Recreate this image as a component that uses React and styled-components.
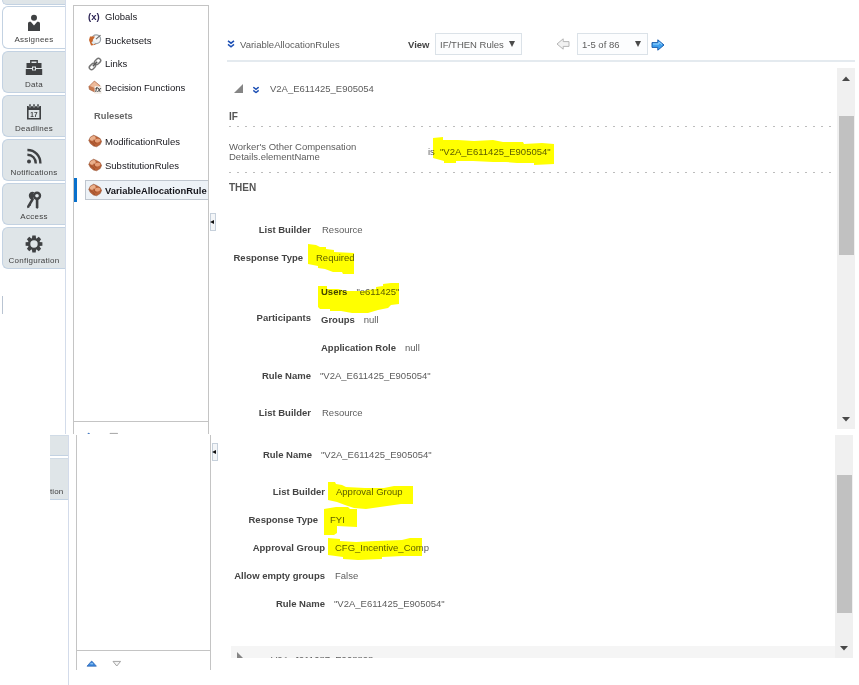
import React from 'react';
import styled, { createGlobalStyle } from 'styled-components';

const tabs = [
  { name: 'Assignees', icon: 'person', active: true },
  { name: 'Data', icon: 'case' },
  { name: 'Deadlines', icon: 'calendar' },
  { name: 'Notifications', icon: 'feed' },
  { name: 'Access', icon: 'keys' },
  { name: 'Configuration', icon: 'gear' },
];

const TabIcon = ({ name }) => (
  <svg width="20" height="18" viewBox="0 0 20 18" fill="#3f4143">
    {name === 'person' && (
      <>
        <circle cx="10" cy="3.8" r="3" />
        <path d="M4 9.4q0-1.6 1.6-1.6h1.2L10 11.4l3.2-3.6h1.2q1.6 0 1.6 1.6V17H4z" />
      </>
    )}
    {name === 'case' && (
      <>
        <path d="M6.8 4.2V1.8h6.4v2.4" fill="none" stroke="#3f4143" strokeWidth="1.4" />
        <path d="M2.5 4h15v5H12V7.6H8V9H2.5zM1.8 10h6.2v1.6h4V10h6.2v6H1.8z" />
        <rect x="9" y="8.6" width="2" height="2" />
      </>
    )}
    {name === 'calendar' && (
      <>
        <path d="M3 3h14v13.5H3z M4.6 7v8h10.8V7z" fillRule="evenodd" />
        <path d="M5 1h2v3H5zM9 1h2v3H9zM13 1h2v3h-2z" stroke="#dfe5e8" strokeWidth=".5" />
        <text x="10" y="13.7" textAnchor="middle" fontSize="6.4" fontWeight="bold">17</text>
      </>
    )}
    {name === 'feed' && (
      <>
        <circle cx="5" cy="14.6" r="2" />
        <path d="M3.4 7.8c5 0 8.4 3.6 8.4 8.6M3.4 3c7.6 0 13 5.8 13 13.4" fill="none" stroke="#3f4143" strokeWidth="2.4" />
      </>
    )}
    {name === 'keys' && (
      <>
        <circle cx="13" cy="4.8" r="3" fill="none" stroke="#3f4143" strokeWidth="2.4" />
        <path d="M11.8 8h2.6v8.4L13.2 18l-1.4-1.4z" />
        <path d="M8 .8a4 4 0 0 0-2.4 6.4L7 8.4 3 15.2l.4 2 2-.6.5-1.5 1-.3.2-1.5 2-3.4.9-1.6C8.6 6 8.6 3 10.4 1.2A5 5 0 0 0 8 .8z" />
      </>
    )}
    {name === 'gear' && (
      <>
        <circle cx="10" cy="9" r="4.9" fill="none" stroke="#3f4143" strokeWidth="2.4" />
        {[0, 45, 90, 135, 180, 225, 270, 315].map((a) => (
          <path key={a} d="M8.3 0.6h3.4l.4 3.3H7.9z" transform={`rotate(${a} 10 9)`} />
        ))}
      </>
    )}
  </svg>
);

const RuleIcon = ({ name }) => (
  <svg width="14" height="14" viewBox="0 0 14 14">
    {name === 'bucket' && (
      <>
        <circle cx="8.2" cy="6.2" r="4.4" fill="#f3f5f6" stroke="#9aa0a5" strokeWidth="1.2" />
        <path d="M2 3.4h5L4.6 7.2l3.2 4.6L3 12.4 1 7z" fill="#c9682e" />
        <path d="M5.6 7.2l2 2.6-2 2-2.2-2z" fill="#dceaf2" />
        <path d="M8 6.2l4.5-4" stroke="#666" strokeWidth="1.1" />
      </>
    )}
    {name === 'link' && (
      <g fill="none" stroke="#757575" strokeWidth="1.5">
        <rect x="6.2" y="2.2" width="6.8" height="4.4" rx="2.2" transform="rotate(-45 9.6 4.4)" />
        <rect x="1" y="7.4" width="6.8" height="4.4" rx="2.2" transform="rotate(-45 4.4 9.6)" />
        <path d="M4.8 9.2l4.4-4.4" stroke="#555" />
      </g>
    )}
    {name === 'rule' && (
      <>
        <path d="M.8 6.4L2.4 3l3.2-1.8 3 1.2 3.6 2.2 1.4 2.8-1.4 3.2-3.6 2.2-3.2-.8-3-2.4z" fill="#bb6237" stroke="#8c4d2e" strokeWidth=".5" />
        <ellipse cx="4.8" cy="4.4" rx="3" ry="2" fill="#eab08c" transform="rotate(-25 4.8 4.4)" />
        <ellipse cx="9.6" cy="6.6" rx="2.8" ry="1.9" fill="#e6a079" transform="rotate(-10 9.6 6.6)" />
        <path d="M2.2 7.4l3.6 2.4.8 2.2M6 5.4L6.4 8l2 2" fill="none" stroke="#8c4526" strokeWidth=".6" />
      </>
    )}
    {name === 'func' && (
      <>
        <path d="M.8 6.6L6.4 1l6 5-1.4 5-3.4 1.6L1.4 9.4z" fill="#c97a50" stroke="#99583a" strokeWidth=".5" />
        <path d="M1.8 6L6.4 1.6l4.8 4L6.8 8z" fill="#edbb9c" />
        <rect x="6.6" y="6.2" width="7" height="7.6" fill="#f4efe9" />
        <text x="7" y="12.3" fontSize="7" fontStyle="italic" fontWeight="bold" fill="#444">fx</text>
      </>
    )}
  </svg>
);

const Chevrons = () => (
  <svg width="8" height="8" viewBox="0 0 8 8" fill="none" stroke="#1c4fb4" strokeWidth="1.5">
    <path d="M1 .8l3 2.4L7 .8M1 4.4l3 2.4 3-2.4" />
  </svg>
);

const PageArrow = ({ dim, back }) => (
  <svg width="14" height="12" viewBox="0 0 14 12">
    <path
      d="M1 3.6h5.8V.8L13 6l-6.2 5.2V8.4H1z"
      fill={dim ? '#f2f2f2' : '#3fa0ee'}
      stroke={dim ? '#b5b5b5' : '#1d5fae'}
      transform={back ? 'translate(14 0) scale(-1 1)' : undefined}
    />
    {!dim && <path d="M2 5h6V3l3 2.6" fill="none" stroke="#9cd6ff" />}
  </svg>
);

const MoveArrows = () => (
  <svg width="38" height="8" viewBox="0 0 38 8">
    <path d="M1 6.2L5.4 1.2h.6l4.4 5z" fill="#3a86dc" stroke="#2a62b0" strokeWidth=".7" />
    <path d="M4.4 3.8h2.6" stroke="#a8d6f8" />
    <path d="M27 1.4h7.6l-3.8 4.6z" fill="#f5f5f5" stroke="#a5a5a5" />
  </svg>
);

const Marker = ({ x, y, w, h, points }) => (
  <MarkerSvg $x={x} $y={y} width={w} height={h} viewBox={`0 0 ${w} ${h}`}>
    <polygon points={points} fill="#ff0" />
  </MarkerSvg>
);

const ScrollBar = ({ thumb, up }) => (
  <Track>
    <Cap $height={up ? 20 : 12}>
      {up && <svg width="8" height="5"><path d="M0 5l4-4.5L8 5z" fill="#484848" /></svg>}
    </Cap>
    <Thumb $height={thumb} />
    <Spacer />
    <Cap $low $height={12}><svg width="8" height="5"><path d="M0 0h8L4 4.5z" fill="#484848" /></svg></Cap>
  </Track>
);

const Field = ({ label, value, end = 85, gap = 11, mark }) => (
  <FieldRow>
    <Label $width={end}>{label}</Label>
    <Value $gap={gap}>{value}{mark && <Marker {...mark} />}</Value>
  </FieldRow>
);

const App = () => (
  <>
    <GlobalStyle />
    <Page>
      <UpperPane>
        <Rail>
          <TabStub />
          {tabs.map((tab) => (
            <Tab key={tab.name} $active={tab.active}>
              <TabIcon name={tab.icon} />
              <span>{tab.name}</span>
            </Tab>
          ))}
          <Tick />
        </Rail>
        <SidePanel>
          <SideList>
            <Item $h={20}><Var>(x)</Var>Globals</Item>
            <Item $h={28}><RuleIcon name="bucket" />Bucketsets</Item>
            <Item $h={19}><RuleIcon name="link" />Links</Item>
            <Item $h={28}><RuleIcon name="func" />Decision Functions</Item>
            <SideTitle>Rulesets</SideTitle>
            <Item><RuleIcon name="rule" />ModificationRules</Item>
            <Item><RuleIcon name="rule" />SubstitutionRules</Item>
            <Selected>
              <SelectedBox><RuleIcon name="rule" />VariableAllocationRule</SelectedBox>
            </Selected>
          </SideList>
          <SideFooter $cut><MoveArrows /></SideFooter>
        </SidePanel>
        <Handle $top={213}>◂</Handle>
        <Main>
          <Toolbar>
            <Chevrons />
            <Title>VariableAllocationRules</Title>
            <ViewLabel>View</ViewLabel>
            <Select $width={87}>IF/THEN Rules <i /></Select>
            <Pager>
              <PageArrow dim back />
              <Select $width={71}>1-5 of 86 <i /></Select>
              <PageArrow />
            </Pager>
          </Toolbar>
          <Body>
            <Rules>
              <RuleHead>
                <svg width="9" height="9"><path d="M9 0v9H0z" fill="#858585" /></svg>
                <Chevrons />
                <span>V2A_E611425_E905054</span>
              </RuleHead>
              <Keyword>IF</Keyword>
              <Dots />
              <Condition>
                <Subject>Worker's Other Compensation Details.elementName</Subject>
                <Operator>is</Operator>
                <Value $gap={5}>
                  "V2A_E611425_E905054"
                  <Marker x={-7} y={-10} w={121} h={29} points="0,1 10,0 10,3 25,3 41,4 60,3 70,5 90,5 91,7 109,6 121,7 121,27 101,28 101,26 84,26 73,25 60,25 40,24 23,24 23,26 11,26 11,24 0,21" />
                </Value>
              </Condition>
              <Dots />
              <Keyword $then>THEN</Keyword>
              <Fields>
                <Field label="List Builder" value="Resource" />
                <Field label="Response Type" value="Required" end={77} gap={13}
                  mark={{ x: -8, y: -8, w: 46, h: 30, points: '0,0 8,1 12,3 18,3 18,5 26,6 26,8 46,9 46,30 35,30 34,28 25,28 17,25 10,24 10,22 0,20' }} />
                <Participants>
                  <Label $width={85}>Participants</Label>
                  <Group>
                    <FieldRow>
                      <Label>Users</Label>
                      <Value $gap={9}>
                        "e611425"
                        <Marker x={-38} y={-4} w={81} h={31} points="0,4 9,4 9,7 20,7 28,9 46,9 50,8 58,7 58,5 65,4 65,2 73,1 81,1 81,22 73,23 70,26 60,28 50,31 34,31 23,29 12,29 12,27 2,27 0,25" />
                      </Value>
                    </FieldRow>
                    <FieldRow><Label>Groups</Label><Value $gap={9}>null</Value></FieldRow>
                    <FieldRow><Label>Application Role</Label><Value $gap={9}>null</Value></FieldRow>
                  </Group>
                </Participants>
                <Field label="Rule Name" value={'"V2A_E611425_E905054"'} gap={9} />
                <Gap />
                <Field label="List Builder" value="Resource" />
              </Fields>
            </Rules>
            <ScrollBar thumb={139} up />
          </Body>
        </Main>
      </UpperPane>
      <LowerPane>
        <LowerRail>
          <CutTab $height={21} />
          <CutTab $height={42}>tion</CutTab>
        </LowerRail>
        <LowerSide>
          <SideList />
          <SideFooter><MoveArrows /></SideFooter>
        </LowerSide>
        <Handle $top={8}>◂</Handle>
        <LowerBody>
          <LowerRules>
            <Field label="Rule Name" value={'"V2A_E611425_E905054"'} end={81} gap={9} />
            <Gap />
            <Field label="List Builder" value="Approval Group" end={94}
              mark={{ x: -8, y: -4, w: 85, h: 27, points: '0,0 7,0 8,2 14,3 18,5 37,6 56,6 66,4 85,4 85,22 73,22 52,25 38,27 26,26 17,23 9,20 0,18' }} />
            <Field label="Response Type" value="FYI" end={87} gap={12}
              mark={{ x: -6, y: -7, w: 33, h: 28, points: '0,2 6,1 12,0 24,0 26,2 33,2 33,20 13,19 13,26 10,28 0,28' }} />
            <Field label="Approval Group" value="CFG_Incentive_Comp" end={94} gap={10}
              mark={{ x: -7, y: -4, w: 94, h: 22, points: '0,0 12,1 12,3 28,4 48,3 74,2 82,0 94,0 94,18 74,18 54,19 54,21 30,22 15,21 15,19 0,17' }} />
            <Field label="Allow empty groups" value="False" end={94} gap={10} />
            <Field label="Rule Name" value={'"V2A_E611425_E905054"'} end={94} gap={9} />
            <Spacer />
            <NextRule>
              <svg width="8" height="10"><path d="M0 0l8 8H0z" fill="#858585" /></svg>
              <span>V2A_J911087_E908828</span>
            </NextRule>
          </LowerRules>
          <ScrollBar thumb={138} />
        </LowerBody>
      </LowerPane>
    </Page>
  </>
);

export default App;

const GlobalStyle = createGlobalStyle`
  * { box-sizing: border-box; }
  body {
    margin: 0;
    background: #fff;
    color: #5d5d5d;
    font-family: 'Liberation Sans', Arial, sans-serif;
    font-size: 9.5px;
    line-height: 11px;
  }
  svg { flex: none; display: block; }
`;

const Page = styled.div`
  width: 859px;
  height: 685px;
  overflow: hidden;
`;

const UpperPane = styled.div`
  display: flex;
  height: 434px;
  overflow: hidden;
`;

const Rail = styled.div`
  width: 66px;
  flex: none;
  padding-left: 2px;
  border-right: 1px solid #d3dcea;
`;

const TabStub = styled.div`
  height: 5px;
  margin-bottom: 1px;
  background: #dfe5e8;
  border: 1px solid #c3d2e2;
  border-top: none;
  border-right: none;
  border-radius: 0 0 0 6px;
`;

const Tab = styled.div`
  display: flex;
  flex-direction: column;
  align-items: center;
  height: ${(p) => (p.$active ? 43 : 42)}px;
  margin-bottom: 2px;
  padding-top: 7px;
  background: ${(p) => (p.$active ? '#fff' : '#dfe5e8')};
  border: 1px solid #c3d2e2;
  border-right: none;
  border-radius: 6px 0 0 6px;
  color: #3e3e3e;
  font-size: 8px;
  letter-spacing: 0.25px;

  svg {
    margin-bottom: 2px;
  }
`;

const Tick = styled.div`
  width: 1px;
  height: 18px;
  margin-top: 27px;
  background: #b9c4d2;
`;

const SidePanel = styled.div`
  display: flex;
  flex-direction: column;
  flex: none;
  width: 136px;
  margin: 5px 0 0 7px;
  border: 1px solid #c4c4c4;
  border-bottom: none;
`;

const LowerSide = styled(SidePanel)`
  width: 135px;
  height: 235px;
  margin: 0 0 0 7px;
  border-top: none;
`;

const SideList = styled.div`
  flex: 1;
  color: #16161c;
`;

const Item = styled.div`
  display: flex;
  align-items: center;
  gap: 3px;
  height: ${(p) => p.$h || 24}px;
  padding-left: 14px;
  white-space: nowrap;
`;

const Var = styled.b`
  width: 14px;
  color: #2c2454;
  font-size: 9.5px;
`;

const SideTitle = styled.div`
  height: 28px;
  padding: 10px 0 0 20px;
  color: #666;
  font-weight: bold;
  font-size: 9.3px;
`;

const Selected = styled.div`
  height: 24px;
  margin-top: 1px;
  padding: 2px 0 2px 8px;
  border-left: 3px solid #0870cc;
`;

const SelectedBox = styled.div`
  display: flex;
  align-items: center;
  gap: 3px;
  height: 20px;
  padding-left: 2px;
  background: #edf2f7;
  border: 1px solid #bfc6cf;
  border-right: none;
  font-size: 9.4px;
  font-weight: bold;
  white-space: nowrap;
`;

const SideFooter = styled.div`
  height: ${(p) => (p.$cut ? 13 : 20)}px;
  padding: ${(p) => (p.$cut ? '10px 0 0 9px' : '9px 0 0 9px')};
  overflow: hidden;
  border-top: 1px solid #c4c4c4;
`;

const Handle = styled.div`
  flex: none;
  width: 6px;
  height: 18px;
  margin: ${(p) => p.$top}px 0 0 1px;
  border: 1px solid #c6d0db;
  background: #f4f6f8;
  color: #111;
  font-size: 8px;
  line-height: 16px;
  text-indent: -1px;
`;

const Main = styled.div`
  display: flex;
  flex-direction: column;
  width: 628px;
  margin-left: 11px;
`;

const Toolbar = styled.div`
  display: flex;
  align-items: center;
  height: 62px;
  padding: 34px 0 6px;
  border-bottom: 2px solid #e4eaef;
`;

const Title = styled.div`
  width: 168px;
  margin-left: 5px;
`;

const ViewLabel = styled.b`
  width: 27px;
  color: #444;
`;

const Select = styled.div`
  display: flex;
  align-items: center;
  justify-content: space-between;
  width: ${(p) => p.$width}px;
  height: 22px;
  padding: 0 6px 0 4px;
  border: 1px solid #dbe2e8;
  background: #fcfdfe;

  i {
    border: 3.5px solid transparent;
    border-top: 6px solid #4a4a4a;
    border-bottom: none;
  }
`;

const Pager = styled.div`
  display: flex;
  align-items: center;
  margin-left: 34px;

  svg:first-child {
    margin-right: 7px;
  }

  svg:last-child {
    margin: 1px 0 0 3px;
  }
`;

const Body = styled.div`
  display: flex;
  height: 361px;
  margin-top: 6px;
`;

const Rules = styled.div`
  flex: 1;
  padding-left: 2px;
`;

const RuleHead = styled.div`
  display: flex;
  align-items: center;
  height: 40px;
  padding-left: 5px;

  svg:nth-child(2) {
    margin: 4px 10px 0 9px;
    transform: scale(0.9);
  }
`;

const Keyword = styled.div`
  height: ${(p) => (p.$then ? 43 : 18)}px;
  padding-top: ${(p) => (p.$then ? 9 : 3)}px;
  color: #555;
  font-size: 10px;
  font-weight: bold;
`;

const Dots = styled.div`
  height: 1px;
  background: repeating-linear-gradient(90deg, #bcbcbc 0 2px, transparent 2px 8px);
`;

const Condition = styled.div`
  display: flex;
  align-items: center;
  height: 45px;
  padding-top: 4px;
  line-height: 10px;
`;

const Subject = styled.div`
  width: 199px;
  padding-right: 65px;
`;

const Operator = styled.span`
  width: 7px;
`;

const Fields = styled.div`
  margin-left: -3px;
`;

const FieldRow = styled.div`
  display: flex;
  align-items: center;
  height: 28px;
  padding-bottom: 1px;
`;

const Label = styled.b`
  flex: none;
  width: ${(p) => (p.$width ? `${p.$width}px` : 'auto')};
  color: #444;
  font-size: 9.5px;
  text-align: right;
  white-space: nowrap;
`;

const Value = styled.span`
  position: relative;
  margin-left: ${(p) => p.$gap}px;
  white-space: nowrap;
`;

const MarkerSvg = styled.svg`
  position: absolute;
  left: ${(p) => p.$x}px;
  top: ${(p) => p.$y}px;
  mix-blend-mode: multiply;
`;

const Participants = styled.div`
  display: flex;
  align-items: center;
  height: 90px;
`;

const Group = styled.div`
  padding: 6px 0 0 10px;
`;

const Gap = styled.div`
  height: 9px;
`;

const Track = styled.div`
  display: flex;
  flex-direction: column;
  flex: none;
  width: 18px;
  background: #f0f0f0;
`;

const Cap = styled.div`
  display: flex;
  flex: none;
  justify-content: center;
  align-items: ${(p) => (p.$low ? 'flex-start' : 'center')};
  height: ${(p) => p.$height}px;
`;

const Thumb = styled.div`
  flex: none;
  height: ${(p) => p.$height}px;
  margin: 28px 1px 0 2px;
  background: #c1c1c1;
`;

const Spacer = styled.div`
  flex: 1;
`;

const LowerPane = styled.div`
  display: flex;
  height: 251px;
  padding: 1px 0 0 50px;
`;

const LowerRail = styled.div`
  flex: none;
  width: 19px;
  border-right: 1px solid #d3dbea;
`;

const CutTab = styled.div`
  height: ${(p) => p.$height}px;
  margin-bottom: 2px;
  padding-top: ${(p) => p.$height - 15}px;
  background: #dfe5e8;
  border-bottom: 1px solid #c3d2e2;
  border-top: 1px solid #d0dbe6;
  color: #3e3e3e;
  font-size: 8px;
  letter-spacing: 0.1px;
`;

const LowerBody = styled.div`
  display: flex;
  width: 622px;
  height: 223px;
  margin-left: 13px;
`;

const LowerRules = styled.div`
  display: flex;
  flex-direction: column;
  flex: 1;
  padding-top: 6px;
`;

const NextRule = styled.div`
  display: flex;
  height: 12px;
  padding: 6px 0 0 6px;
  overflow: hidden;
  background: #f5f5f5;

  span {
    margin: 2px 0 0 26px;
  }
`;
